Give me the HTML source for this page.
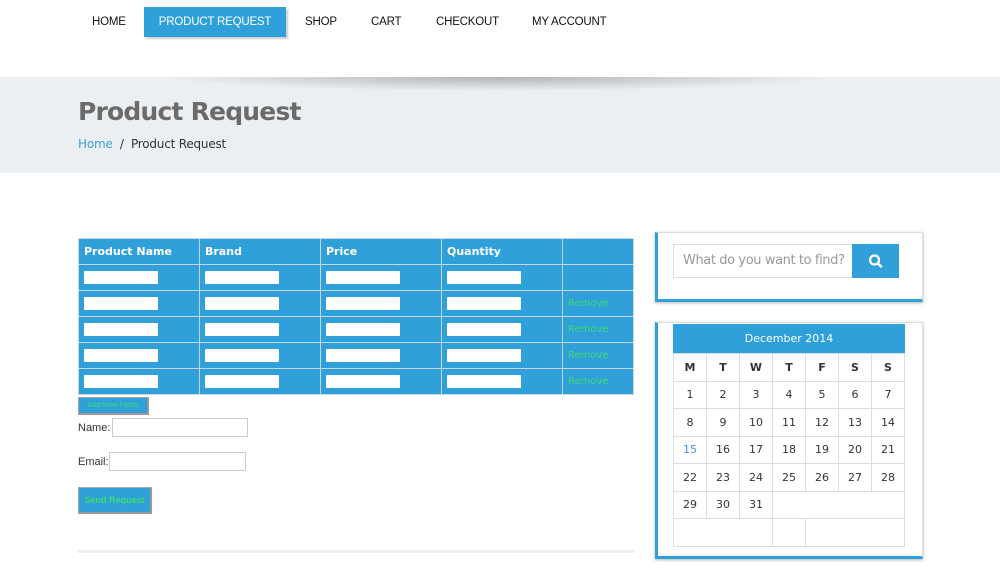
<!DOCTYPE html>
<html><head><meta charset="utf-8"><style>
*{margin:0;padding:0;box-sizing:border-box}
body{width:1000px;height:572px;background:#fff;position:relative;overflow:hidden;font-family:"Liberation Sans","DejaVu Sans",sans-serif}
.a{position:absolute}
.nav{font-size:11.5px;color:#111;top:16px;letter-spacing:-0.2px}
.band{left:0;top:77px;width:1000px;height:96px;background:#eceff2}
.shadow{left:165px;top:77px;width:665px;height:14px;background:radial-gradient(ellipse 50% 100% at 50% 0%,rgba(0,0,0,.25),rgba(0,0,0,0) 100%)}
table.t{border-collapse:collapse;position:absolute;left:78px;top:238px;width:556px;background:#2fa0da}
table.t td{border:1px solid #c9d6df;height:26px;padding:0 5px;color:#fff;font-size:11px;font-weight:bold;font-family:"DejaVu Sans",sans-serif}
table.t td.w{width:121px}
.in{display:block;width:74px;height:13px;background:#fff;border-radius:1px}
table.t td.rm{color:#3ddc6e;font-weight:normal;font-size:10px}
.btn{background:#2fa0da;border:1px solid #aaa;border-right:2px solid #999;border-bottom:2px solid #999;color:#3ddc6e}
.box{background:#fff;border:1px solid #ddd;border-left:3px solid #2fa0da;border-bottom:3px solid #2fa0da;box-shadow:0 1px 3px rgba(0,0,0,.3)}
table.c{border-collapse:collapse;position:absolute;left:673px;top:353px;width:232px}
table.c td{border:1px solid #ddd;height:27.5px;text-align:center;font-size:11px;color:#333;font-family:"DejaVu Sans",sans-serif}
</style></head><body>
<div class="a nav" style="left:92px">HOME</div>
<div class="a" style="left:144px;top:7px;width:142px;height:30px;background:#2fa0da;box-shadow:2px 2px 2px #ccc;color:#fff;font-size:11.5px;letter-spacing:-0.2px;text-align:center;line-height:30px">PRODUCT REQUEST</div>
<div class="a nav" style="left:305px">SHOP</div>
<div class="a nav" style="left:371px">CART</div>
<div class="a nav" style="left:436px">CHECKOUT</div>
<div class="a nav" style="left:532px">MY ACCOUNT</div>
<div class="a band"></div>
<div class="a shadow"></div>
<div class="a" style="left:78px;top:97px;font-size:25px;font-weight:bold;color:#6b6b6b;font-family:'DejaVu Sans',sans-serif;letter-spacing:-0.8px">Product Request</div>
<div class="a" style="left:78px;top:137px;font-size:12px;color:#333;font-family:'DejaVu Sans',sans-serif;letter-spacing:-0.2px"><span style="color:#3d9fd8">Home</span> &nbsp;/ &nbsp;Product Request</div>

<table class="t">
<tr><td class="w">Product Name</td><td class="w">Brand</td><td class="w">Price</td><td class="w">Quantity</td><td></td></tr>
<tr><td><span class="in"></span></td><td><span class="in"></span></td><td><span class="in"></span></td><td><span class="in"></span></td><td></td></tr>
<tr><td><span class="in"></span></td><td><span class="in"></span></td><td><span class="in"></span></td><td><span class="in"></span></td><td class="rm">Remove</td></tr>
<tr><td><span class="in"></span></td><td><span class="in"></span></td><td><span class="in"></span></td><td><span class="in"></span></td><td class="rm">Remove</td></tr>
<tr><td><span class="in"></span></td><td><span class="in"></span></td><td><span class="in"></span></td><td><span class="in"></span></td><td class="rm">Remove</td></tr>
<tr><td><span class="in"></span></td><td><span class="in"></span></td><td><span class="in"></span></td><td><span class="in"></span></td><td class="rm">Remove</td></tr>
</table>
<div class="a btn" style="left:78px;top:397px;width:71px;height:18px;font-size:7px;text-align:center;line-height:15px">Add More Fields</div>
<div class="a" style="left:78px;top:422px;font-size:11px;color:#333">Name:</div>
<div class="a" style="left:112px;top:418px;width:136px;height:19px;border:1px solid #ccc"></div>
<div class="a" style="left:78px;top:456px;font-size:11px;color:#333">Email:</div>
<div class="a" style="left:109px;top:452px;width:137px;height:19px;border:1px solid #ccc"></div>
<div class="a btn" style="left:78px;top:487px;width:74px;height:27px;font-size:9px;font-weight:bold;text-align:center;line-height:24px">Send Request</div>
<div class="a" style="left:78px;top:550px;width:556px;height:3px;background:#eee"></div>

<div class="a box" style="left:655px;top:232px;width:268px;height:70px"></div>
<div class="a" style="left:673px;top:244px;width:180px;height:34px;border:1px solid #ddd;font-size:13px;color:#999;line-height:32px;padding-left:9px;white-space:nowrap;overflow:hidden;font-family:'DejaVu Sans',sans-serif;letter-spacing:-0.4px">What do you want to find?</div>
<div class="a" style="left:852px;top:244px;width:47px;height:34px;background:#2fa0da">
<svg width="47" height="34"><circle cx="22.5" cy="16" r="4.5" fill="none" stroke="#fff" stroke-width="2.2"/><line x1="26" y1="19.5" x2="29" y2="22.5" stroke="#fff" stroke-width="2.6" stroke-linecap="round"/></svg></div>

<div class="a box" style="left:655px;top:322px;width:268px;height:237px"></div>
<div class="a" style="left:673px;top:324px;width:232px;height:29px;background:#2fa0da;color:#fff;font-size:11px;text-align:center;line-height:29px;font-family:'DejaVu Sans',sans-serif">December 2014</div>
<table class="c">
<tr><td><b>M</b></td><td><b>T</b></td><td><b>W</b></td><td><b>T</b></td><td><b>F</b></td><td><b>S</b></td><td><b>S</b></td></tr>
<tr><td>1</td><td>2</td><td>3</td><td>4</td><td>5</td><td>6</td><td>7</td></tr>
<tr><td>8</td><td>9</td><td>10</td><td>11</td><td>12</td><td>13</td><td>14</td></tr>
<tr><td style="color:#4a8fd0">15</td><td>16</td><td>17</td><td>18</td><td>19</td><td>20</td><td>21</td></tr>
<tr><td>22</td><td>23</td><td>24</td><td>25</td><td>26</td><td>27</td><td>28</td></tr>
<tr><td>29</td><td>30</td><td>31</td><td colspan="4"></td></tr>
<tr><td colspan="3"></td><td></td><td colspan="3"></td></tr>
</table>
</body></html>
